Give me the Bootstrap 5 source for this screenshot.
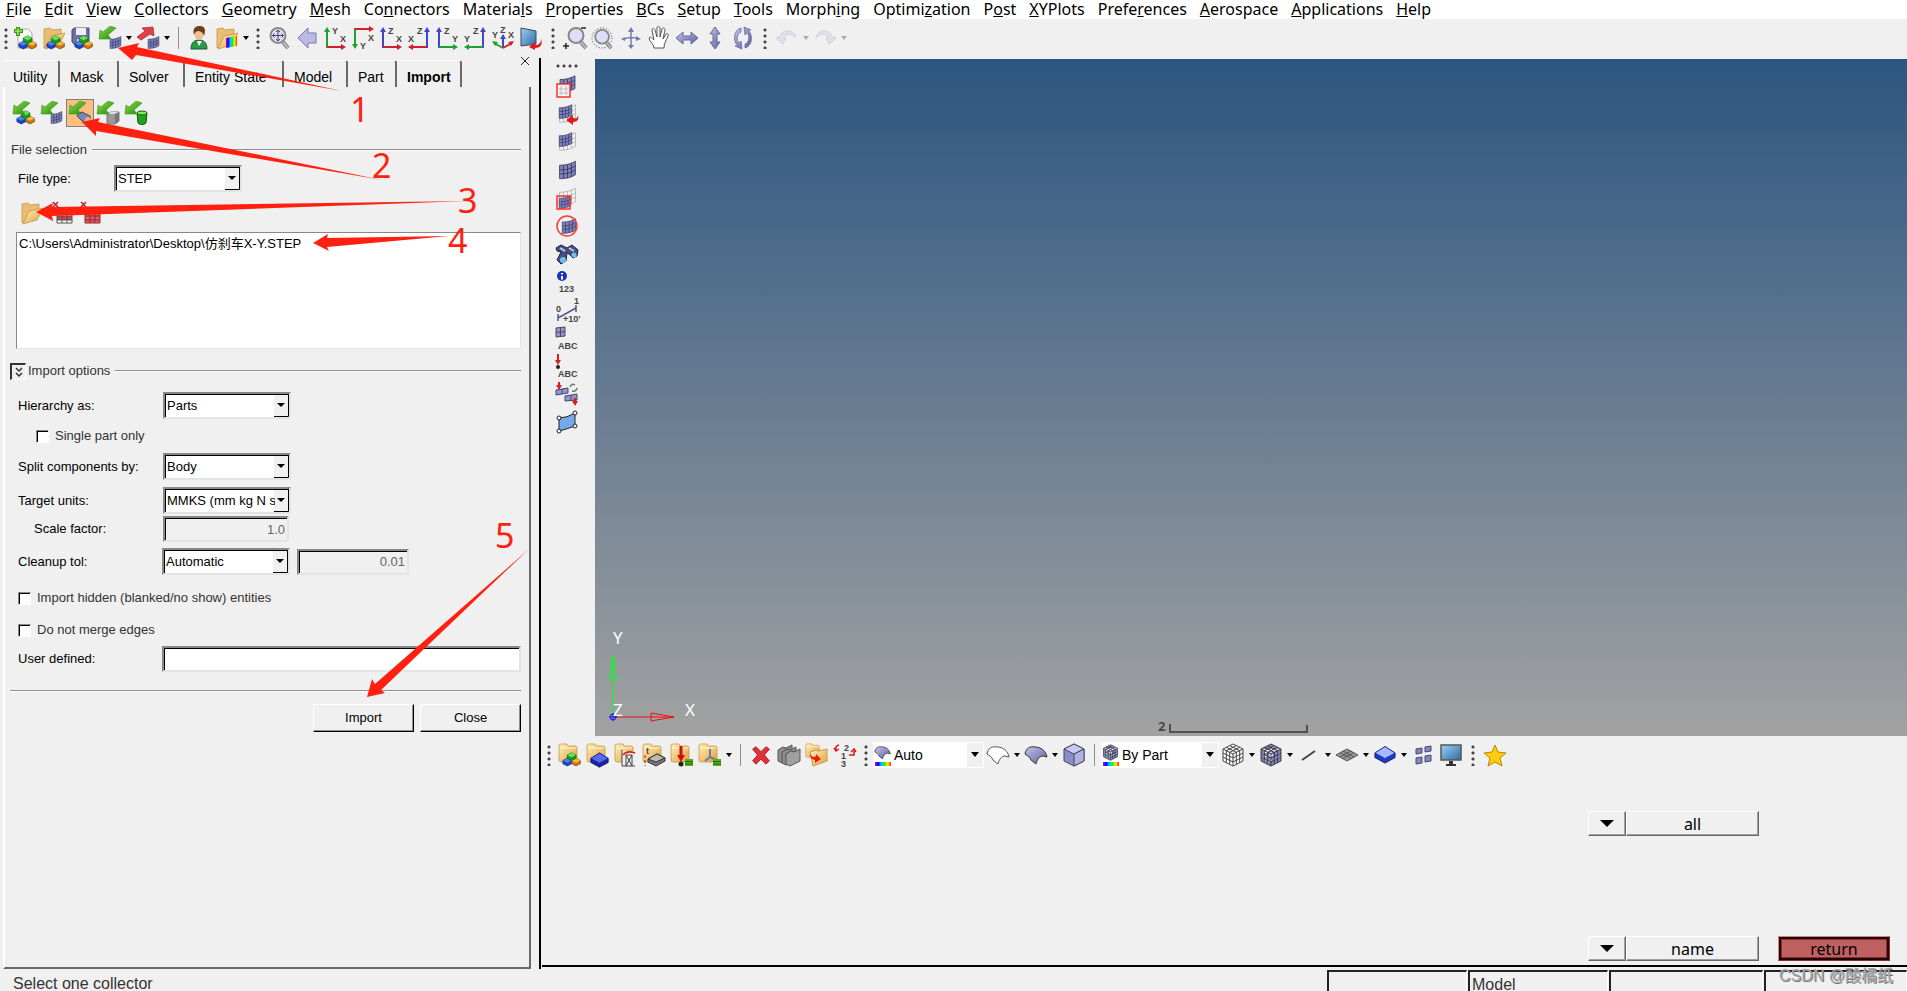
<!DOCTYPE html>
<html lang="en">
<head>
<meta charset="utf-8">
<meta name="viewport" content="width=device-width, initial-scale=1">
<title>Model import</title>
<link href="https://cdn.jsdelivr.net/npm/bootstrap@5.3.0/dist/css/bootstrap.min.css" rel="stylesheet">
<style>
  :root { --face: #f0f0f0; --ui: "Liberation Sans", "Noto Sans CJK SC", sans-serif; --menu: "Noto Sans", sans-serif; --mark: #ff2010; }
  body { background: var(--face); color: #000; font: 13px/16px var(--ui); min-height: 100vh; overflow: hidden; }
  .menubar { background: #fff; font: 16px/19px var(--menu); height: 19px; padding-left: 6px; gap: 13px; }
  .menubar a { color: #000; text-decoration: none; padding: 0; }
  .toolstrip { height: 38px; }
  .tool { width: 28px; height: 28px; padding: 2px; border: 0; border-radius: 0; line-height: 0; flex: none; }
  .tool svg { width: 24px; height: 24px; overflow: visible; }
  .drop { width: 10px; height: 28px; padding: 0; border: 0; flex: none; display: flex; align-items: center; justify-content: center; }
  .drop::after { content: ""; border: 3px solid transparent; border-top: 4px solid #000; border-bottom: 0; }
  .drop.dim::after { border-top-color: #aaa; }
  .cmd-arrow { display: flex; align-items: center; justify-content: center; }
  .cmd-arrow::after { content: ""; border: solid transparent; border-width: 7px 7px 0; border-top-color: #000; }
  .grip { flex: none; height: 22px; background: radial-gradient(circle, #444 1px, transparent 2px) center top / 4px 6px repeat-y; }
  .grip-h { height: 4px; width: 24px; background: radial-gradient(circle, #444 1px, transparent 2px) left center / 6px 4px repeat-x; }
  .w12 { width: 12px; } .w14 { width: 14px; } .w16 { width: 16px; }
  .rule-v { flex: none; width: 13px; height: 22px; background: linear-gradient(#909090, #909090) center / 1px 100% no-repeat; }
  /* docked browser */
  .dock { width: 539px; flex: none; padding: 3px 8px 0 3px; }
  .tabs { height: 27px; }
  .tabs button { border: 0; border-top: 1px solid #fff; border-right: 2px solid #696969; border-radius: 0 3px 0 0; background: none; font-size: 14px; line-height: 16px; padding: 6px 0 0 10px; text-align: left; height: 27px; }
  .tabs .shut { border: 0; padding: 0; width: 8px; height: 8px; right: 10px; top: 0; line-height: 0; }
  .pane { border: solid; border-width: 0 2px 2px 2px; border-color: #fff #696969 #696969 #fff; padding: 12px 8px 0 5px; }
  .heading { color: #333; height: 20px; gap: 5px; }
  .heading::after { content: ""; flex: 1; height: 2px; border-top: 1px solid #909090; background: #fff; }
  .sunk { border: 2px solid; border-color: #888 #e4e4e4 #e4e4e4 #888; box-shadow: inset 1px 1px #000; border-radius: 0; background-color: #fff; color: #000; font: 13px/18px var(--ui); padding: 1px 2px; }
  select.sunk { appearance: none; width: 128px; height: 27px; padding-right: 14px; background: #fff url("data:image/svg+xml,%3Csvg xmlns='http://www.w3.org/2000/svg' width='15' height='24'%3E%3Cpath fill='%23f0f0f0' d='M0 0h15v24H0z'/%3E%3Cpath stroke='%23000' fill='none' d='M0 22.5h14.5V0'/%3E%3Cpath d='M3 9h8L7 13z'/%3E%3C/svg%3E") right top no-repeat; }
  input.sunk { height: 26px; }
  input.sunk:disabled { background: var(--face); color: #666; text-align: right; }
  .tick { appearance: none; width: 13px; height: 13px; margin: 0; border: 1px solid; border-color: #888 #fff #fff #888; box-shadow: inset 1px 1px #000; background: #fff; flex: none; }
  .opt { color: #333; gap: 6px; height: 16px; }
  .files { width: 505px; height: 117px; resize: none; box-shadow: none; border-width: 1px; display: block; line-height: 17px; padding: 2px; }
  .push { width: 101px; height: 28px; border: 1px solid; border-color: #fff #000 #000 #fff; box-shadow: inset -1px -1px #909090; background: var(--face); }
  .picked { background: #fdbe7e; border: 1px solid #808080; padding: 1px; }
  .expander { width: 16px; height: 17px; padding: 0; border: solid; border-width: 2px 1px 1px 2px; border-color: #333 #fff #fff #333; background: var(--face); line-height: 0; }
  .splitter { width: 3px; flex: none; border-left: 2px solid #000; margin-top: 1px; }
  .side { width: 53px; padding: 7px 4px 0 0; flex: none; }
  .scene { background: linear-gradient(#2c5580, #a2a2a2); margin-top: 2px; }
  .axes { left: 10px; bottom: 8px; overflow: visible; }
  .scalebar { right: 590px; bottom: 0; }
  .display { background: #fff; height: 26px; padding-left: 1px; }
  .display svg { width: 18px; height: 26px; flex: none; }
  .display select { appearance: none; border: 0; background: #fff url("data:image/svg+xml,%3Csvg xmlns='http://www.w3.org/2000/svg' width='17' height='26'%3E%3Cpath fill='%23f0f0f0' d='M0 1h16v24H0z'/%3E%3Cpath d='M4 10h8l-4 5z'/%3E%3C/svg%3E") right center no-repeat; font-size: 14px; height: 26px; padding: 0 0 0 2px; flex: 1; min-width: 0; }
  .commands { display: grid; grid-template-columns: 38px 133px 131px; grid-template-rows: 25px 25px; row-gap: 100px; justify-content: end; padding: 37px 17px 4px 0; border-bottom: 2px solid #000; }
  .commands button { font: 16px/20px var(--menu); background-color: var(--face); border: 1px solid; border-color: #fff #696969 #696969 #fff; box-shadow: inset -1px -1px #a0a0a0; padding: 0; }
  .commands .back { background: #c06060; border: 1px solid #e08080; border-right-color: #823030; border-bottom-color: #823030; box-shadow: inset 0 0 0 2px #200000, inset 0 0 0 3px #823030; margin-left: 19px; }
  .status { height: 22px; font-size: 16px; line-height: 30px; color: #333; overflow: hidden; padding-left: 13px; }
  .status .cell { border: solid; border-width: 2px 1px 0 2px; border-color: #222 #fff #fff #222; height: 21px; width: 140px; padding-left: 2px; line-height: 26px; margin: 1px 1px 0 0; flex: none; }
  .status .wide { width: 154px; }
  .status .last { width: 143px; margin-right: 0; }
  .credit { right: 14px; bottom: 4px; font: 16px/22px var(--ui); color: #aaa; text-shadow: 1px 1px #777; }
  .marks { left: 0; top: 0; pointer-events: none; }
  .marks path { fill: var(--mark); } .marks text { fill: var(--mark); font: 34px var(--menu); }
  .sym text { font: bold 9px var(--ui); fill: #444; }
  .axes text, .sym .axes text { fill: #fff; font: 17px var(--menu); }
</style>
<script src="https://cdn.jsdelivr.net/npm/bootstrap@5.3.0/dist/js/bootstrap.bundle.min.js"></script>
</head>
<body class="d-flex flex-column position-relative">

<svg width="0" height="0" class="position-absolute sym" aria-hidden="true">
  <defs>
    <linearGradient id="gFold" x2="1" y2="1"><stop offset="0" stop-color="#fff0bc"/><stop offset="1" stop-color="#e0a040"/></linearGradient>
    <linearGradient id="gGreen" x2="1" y2="1"><stop offset="0" stop-color="#8ee040"/><stop offset="1" stop-color="#1c8a10"/></linearGradient>
    <linearGradient id="gLav" x2="1" y2="1"><stop offset="0" stop-color="#c4c6ee"/><stop offset="1" stop-color="#5c5e98"/></linearGradient>
    <linearGradient id="gScr" x2="1" y2="1"><stop offset="0" stop-color="#9cd0f4"/><stop offset="1" stop-color="#2d6aa8"/></linearGradient>
    <linearGradient id="gRain"><stop offset="0" stop-color="#e0a"/><stop offset=".2" stop-color="#00f"/><stop offset=".4" stop-color="#0cf"/><stop offset=".6" stop-color="#2e2"/><stop offset=".8" stop-color="#fe0"/><stop offset="1" stop-color="#f20"/></linearGradient>
  </defs>
  <symbol id="trio" viewBox="3 2 21 22"><g stroke-width=".6"><path d="M7 18l4-2 4 2v3l-4 2-4-2z" fill="#1746c8" stroke="#0a2070"/><path d="M7 18l4-2 4 2-4 2z" fill="#4f80f0"/><path d="M15 18l4-2 4 2v3l-4 2-4-2z" fill="#c87a10" stroke="#704000"/><path d="M15 18l4-2 4 2-4 2z" fill="#f8b848"/><path d="M11 13l4-2 4 2v3l-4 2-4-2z" fill="#18a018" stroke="#0a5a0a"/><path d="M11 13l4-2 4 2-4 2z" fill="#6ee060"/></g></symbol>
  <symbol id="fold" viewBox="0 0 24 24"><path d="M2 3l6-1 2 2 9-1v6L4 21l-2 1z" fill="#e8be70" stroke="#c08c38" stroke-width=".7"/><path d="M9 10l14-3-6 12-14 4z" fill="url(#gFold)" stroke="#c08c38" stroke-width=".7"/></symbol>
  <symbol id="card-fold" viewBox="0 0 24 24"><path d="M1 3q0-2 2-2h6l1 2h7q2 0 2 2v12q0 2-2 2H3q-2 0-2-2z" fill="url(#gFold)" stroke="#c89a48" stroke-width=".8"/><path d="M2 5h16" stroke="#fff6d0"/></symbol>
  <symbol id="in" viewBox="0 0 24 24"><path d="M1 13L2 4l3 2 7-6 6 2-8 7 3 4z" fill="url(#gGreen)" stroke="#3a9020" stroke-width=".6"/></symbol>
  <symbol id="net" viewBox="0 0 24 24"><path d="M2 6C9 6 15 5 22 1v17C16 22 9 23 2 23z" fill="#7f82bd" stroke="#303358"/><path d="M7 6v17M12 5v17M17 3v17M2 12c7 0 14-1 20-5M2 17c7 0 14-1 20-5" stroke="#303358" fill="none"/></symbol>
  <symbol id="wire" viewBox="0 0 24 24"><path d="M2 6C9 6 15 5 22 1v17C16 22 9 23 2 23zM7 6v17M12 5v17M17 3v17M2 12c7 0 14-1 20-5M2 17c7 0 14-1 20-5" stroke="#999" stroke-width=".8" fill="#f4f4f4"/></symbol>
  <symbol id="disk" viewBox="0 0 24 24"><path d="M2 4l2-2h15v17H5l-3-3z" fill="#6a70ac" stroke="#44486e"/><path d="M6 2h10v7H6z" fill="#eceef8"/><path d="M7 13h8v6H7z" fill="#d0d2e2"/></symbol>
  <symbol id="lens" viewBox="0 0 24 24"><path d="M15 15l6 7" stroke="#777" stroke-width="4"/><path d="M15 15l6 7" stroke="#bbc" stroke-width="2"/><circle cx="11" cy="9.500" r="7.500" fill="#dcdff6" stroke="#888" stroke-width="2"/></symbol>
  <symbol id="roll" viewBox="0 0 24 24"><path d="M1 11C2 5 6 3 11 4c6 0 11 4 12 10l-4-1c-3 0-6 3-7 8l-5-4c-1-3-3-4-6-6z" fill="url(#gLav)" stroke="#333"/></symbol>
  <symbol id="cube3" viewBox="0 0 24 24"><path d="M2 6l10-5 10 5v12l-10 5-10-5zM2 6l10 5 10-5M12 11v12M5.300 4.300l10 5V21.300M8.700 2.700l10 5v12M15.300 2.700l-10 5v12M18.700 4.300l-10 5v12M2 10l10 5 10-5M2 14l10 5 10-5" stroke="#333" stroke-width=".9" fill="inherit"/></symbol>
  <symbol id="slab" viewBox="0 0 24 24"><path d="M1 12l11-7 11 7v5l-11 6-11-6z" fill="#2038c0" stroke="#102070"/><path d="M1 12l11-7 11 7-11 6z" fill="#a8baff" stroke="#2038c0"/></symbol>
  <symbol id="slab-dark" viewBox="0 0 24 24"><path d="M1 12l11-7 11 7v5l-11 6-11-6z" fill="#1824a0" stroke="#101860"/><path d="M1 12l11-7 11 7-11 6z" fill="#5868f0" stroke="#1824a0"/></symbol>
  <symbol id="redX" viewBox="0 0 24 24"><path d="M2 5l4-3 6 6 6-6 4 3-6 7 6 7-4 4-6-6-6 6-4-4 6-7z" fill="#e03038" stroke="#a01018"/></symbol>
</svg>

<nav class="menubar nav flex-nowrap" aria-label="Main menu">
  <a href="#"><u>F</u>ile</a><a href="#"><u>E</u>dit</a><a href="#"><u>V</u>iew</a><a href="#"><u>C</u>ollectors</a><a href="#"><u>G</u>eometry</a><a href="#"><u>M</u>esh</a><a href="#">Co<u>n</u>nectors</a><a href="#">Materia<u>l</u>s</a><a href="#"><u>P</u>roperties</a><a href="#"><u>B</u>Cs</a><a href="#"><u>S</u>etup</a><a href="#"><u>T</u>ools</a><a href="#">Morph<u>i</u>ng</a><a href="#">Optimi<u>z</u>ation</a><a href="#">P<u>o</u>st</a><a href="#"><u>X</u>YPlots</a><a href="#">Prefe<u>r</u>ences</a><a href="#"><u>A</u>erospace</a><a href="#"><u>A</u>pplications</a><a href="#"><u>H</u>elp</a>
</nav>

<div class="toolstrip d-flex align-items-center sym" role="toolbar" aria-label="Standard">
  <span class="grip w12"></span>
  <button class="btn tool" aria-label="New model"><svg viewBox="0 0 24 24"><path d="M4 3h10l4 4v15H4z" fill="#fafafa" stroke="#aaa"/><path d="M4 1v9M0 5h9" stroke="#3a9a18" stroke-width="4"/><path d="M4 2v7M1 5h7" stroke="#a4e468" stroke-width="1.500"/><use href="#trio"/></svg></button>
  <button class="btn tool" aria-label="Open model"><svg viewBox="0 0 24 24"><use href="#fold"/><use href="#trio"/></svg></button>
  <button class="btn tool" aria-label="Save model"><svg viewBox="0 0 24 24"><use href="#disk"/><use href="#trio"/></svg></button>
  <button class="btn tool" aria-label="Import"><svg viewBox="0 0 24 24"><use href="#net" x="11" y="9" width="13" height="15"/><use href="#in"/></svg></button>
  <button class="drop btn" aria-label="Import menu"></button>
  <button class="btn tool" aria-label="Export"><svg viewBox="0 0 24 24"><use href="#net" x="11" y="9" width="13" height="15"/><path d="M1 11l8-6-3-3 11-1 1 9-4-2-9 6z" fill="#e04048" stroke="#a02028" stroke-width=".7"/></svg></button>
  <button class="drop btn" aria-label="Export menu"></button>
  <span class="rule-v w14"></span>
  <button class="btn tool" aria-label="User profile"><svg viewBox="0 0 24 24"><path d="M4 23c0-7 4-9 8-9s8 2 8 9z" fill="#2c9a48" stroke="#116028"/><path d="M10 15l2 5 3-5z" fill="#fff"/><ellipse cx="12" cy="8" rx="4.500" ry="6" fill="#f0c090"/><path d="M7 9C5 2 9 0 13 0c5 0 6 4 4 10-1-3-2-4-5-5-3 0-4 1-5 4z" fill="#6a3c18"/></svg></button>
  <button class="btn tool" aria-label="Load results"><svg viewBox="0 0 24 24"><use href="#fold"/><path d="M11 12v10l11-2v-10z" fill="url(#gRain)"/></svg></button>
  <button class="drop btn" aria-label="Results menu"></button>
  <span class="grip w14"></span>
  <button class="btn tool" aria-label="Fit"><svg viewBox="0 0 24 24"><use href="#lens"/><path d="M11 4v11M5.500 9.500h11M9 6l2-2 2 2M9 13l2 2 2-2M7.500 7.500l-2 2 2 2M14.500 7.500l2 2-2 2" stroke="#445" fill="none"/></svg></button>
  <button class="btn tool" aria-label="Previous view"><svg viewBox="0 0 24 24"><path d="M3 12l10-10v5h8v10h-8v5z" fill="#b9bbe4" stroke="#7779aa"/></svg></button>
  <button class="btn tool" aria-label="XY top"><svg viewBox="0 0 24 24"><path d="M4 22V4" stroke="#20a030" stroke-width="2"/><path d="M1 6l3-5 3 5z" fill="#20a030"/><path d="M4 21h16" stroke="#d02030" stroke-width="2"/><path d="M18 18l5 3-5 3z" fill="#d02030"/><text x="9" y="8">Y</text><text x="17" y="16">X</text></svg></button>
  <button class="btn tool" aria-label="XY bottom"><svg viewBox="0 0 24 24"><path d="M3 3h17" stroke="#d02030" stroke-width="2"/><path d="M18 0l5 3-5 3z" fill="#d02030"/><path d="M4 3v16" stroke="#20a030" stroke-width="2"/><path d="M1 18l3 5 3-5z" fill="#20a030"/><text x="17" y="15">X</text><text x="9" y="23">Y</text></svg></button>
  <button class="btn tool" aria-label="XZ left"><svg viewBox="0 0 24 24"><path d="M4 22V4" stroke="#4048c8" stroke-width="2"/><path d="M1 6l3-5 3 5z" fill="#4048c8"/><path d="M4 21h16" stroke="#d02030" stroke-width="2"/><path d="M18 18l5 3-5 3z" fill="#d02030"/><text x="9" y="8">Z</text><text x="17" y="16">X</text></svg></button>
  <button class="btn tool" aria-label="XZ right"><svg viewBox="0 0 24 24"><path d="M20 22V4" stroke="#4048c8" stroke-width="2"/><path d="M17 6l3-5 3 5z" fill="#4048c8"/><path d="M20 21H5" stroke="#d02030" stroke-width="2"/><path d="M6 18l-5 3 5 3z" fill="#d02030"/><text x="10" y="8">Z</text><text x="1" y="16">X</text></svg></button>
  <button class="btn tool" aria-label="YZ left"><svg viewBox="0 0 24 24"><path d="M4 22V4" stroke="#4048c8" stroke-width="2"/><path d="M1 6l3-5 3 5z" fill="#4048c8"/><path d="M4 21h16" stroke="#20a030" stroke-width="2"/><path d="M18 18l5 3-5 3z" fill="#20a030"/><text x="9" y="8">Z</text><text x="17" y="16">Y</text></svg></button>
  <button class="btn tool" aria-label="YZ right"><svg viewBox="0 0 24 24"><path d="M20 22V4" stroke="#4048c8" stroke-width="2"/><path d="M17 6l3-5 3 5z" fill="#4048c8"/><path d="M20 21H5" stroke="#20a030" stroke-width="2"/><path d="M6 18l-5 3 5 3z" fill="#20a030"/><text x="10" y="8">Z</text><text x="1" y="16">Y</text></svg></button>
  <button class="btn tool" aria-label="Isometric"><svg viewBox="0 0 24 24"><path d="M12 22V11" stroke="#4048c8" stroke-width="2"/><path d="M9 13l3-5 3 5z" fill="#4048c8"/><path d="M12 22l-9-5" stroke="#20a030" stroke-width="2"/><path d="M12 22l9-5" stroke="#d02030" stroke-width="2"/><path d="M1 15l6 1-3 4z" fill="#20a030"/><path d="M23 15l-6 1 3 4z" fill="#d02030"/><text x="1" y="12">Y</text><text x="9" y="7">Z</text><text x="17" y="12">X</text></svg></button>
  <button class="btn tool" aria-label="Restore view"><svg viewBox="0 0 24 24"><path d="M2 2l15 3v13l-15 2z" fill="url(#gScr)" stroke="#445"/><path d="M22 13c0 5-3 6-6 6v-3l-6 5 6 3v-2c5 0 8-3 6-9z" fill="#e01818"/></svg></button>
  <span class="grip w16"></span>
  <button class="btn tool" aria-label="Zoom"><svg viewBox="0 0 24 24"><use href="#lens" x="2"/><path d="M0 20h6M3 17v6M18 2h5" stroke="#222" stroke-width="1.500"/></svg></button>
  <button class="btn tool" aria-label="Circle zoom"><svg viewBox="0 0 24 24"><circle cx="11" cy="12" r="10" fill="none" stroke="#333" stroke-dasharray="1 2"/><use href="#lens" x="1" y="2" width="22" height="22"/></svg></button>
  <button class="btn tool" aria-label="Rotate"><svg viewBox="0 0 24 24"><path d="M12 5v16M5 13q7-3 15 0" stroke="#7779aa" stroke-width="1.500" fill="none"/><path d="M12 1l-3 5h6zM22 13l-5-3v5zM2 13l4-2v4zM12 23l-3-4h6z" fill="#7779aa"/></svg></button>
  <button class="btn tool" aria-label="Pan"><svg viewBox="0 0 24 24"><path d="M7 22c0-4-5-7-5-10 1-2 3 0 5 2L5 4c0-2 2-2 3 0l2 7V2c0-2 3-2 3 0v9l2-8c1-2 3-1 3 1l-2 9 3-5c1-1 3 0 2 2-2 5-4 7-4 12z" fill="#fff" stroke="#555"/></svg></button>
  <button class="btn tool" aria-label="Slide sideways"><svg viewBox="0 0 24 24"><path d="M1 12l7-6v4h8V6l7 6-7 6v-4H8v4z" fill="url(#gLav)" stroke="#66689c"/></svg></button>
  <button class="btn tool" aria-label="Slide vertically"><svg viewBox="0 0 24 24"><path d="M12 1l5 7h-3v8h3l-5 7-5-7h3V8H7z" fill="url(#gLav)" stroke="#66689c"/></svg></button>
  <button class="btn tool" aria-label="Spin"><svg viewBox="0 0 24 24"><path d="M10 2c-8 2-8 14-3 18H4l7 3-1-8-2 2C5 14 6 7 10 6zM14 22c8-2 8-14 3-18h3l-7-3 1 8 2-2c3 3 2 10-2 11z" fill="url(#gLav)" stroke="#66689c" stroke-width=".8"/></svg></button>
  <span class="grip w16"></span>
  <button class="btn tool" aria-label="Undo"><svg viewBox="0 0 24 24"><path d="M1 12l7 6 3-6H9c1-5 8-5 12 0C20 3 7 2 5 11z" fill="#dfe0ec" stroke="#d0d1e0"/></svg></button>
  <button class="drop dim btn" aria-label="Undo list"></button>
  <button class="btn tool" aria-label="Redo"><svg viewBox="0 0 24 24"><path d="M23 12l-7 6-3-6h2C14 7 7 7 3 12 4 3 17 2 19 11z" fill="#dfe0ec" stroke="#d0d1e0"/></svg></button>
  <button class="drop dim btn" aria-label="Redo list"></button>
</div>

<main class="d-flex flex-grow-1">
  <section class="dock d-flex flex-column position-relative" aria-label="Browser">
    <div class="tabs d-flex" role="tablist">
      <button role="tab" style="width:57px">Utility</button><button role="tab" style="width:59px">Mask</button><button role="tab" style="width:66px">Solver</button><button role="tab" style="width:99px">Entity State</button><button role="tab" style="width:64px">Model</button><button role="tab" style="width:49px">Part</button><button role="tab" class="fw-bold" style="width:65px" aria-selected="true">Import</button>
      <button class="shut position-absolute" aria-label="Close browser"><svg width="8" height="8" viewBox="0 0 8 8"><path d="M0 0l8 8M8 0L0 8" stroke="#222"/></svg></button>
    </div>
    <form class="pane flex-grow-1" onsubmit="return false">
      <div class="d-flex">
        <button class="btn tool" aria-label="Import model"><svg viewBox="0 0 24 24"><use href="#trio"/><use href="#in"/></svg></button>
        <button class="btn tool" aria-label="Import solver deck"><svg viewBox="0 0 24 24"><use href="#net" x="10" y="9" width="13" height="15"/><use href="#in"/></svg></button>
        <button class="btn tool picked" aria-label="Import geometry"><svg viewBox="0 0 24 24"><path d="M9 15q1-4 5-4l8 4q2 4-2 8h-3z" fill="#7f82b4" stroke="#44466e"/><ellipse cx="20" cy="19" rx="3" ry="3" fill="#e8b070"/><use href="#in"/></svg></button>
        <button class="btn tool" aria-label="Import connectors"><svg viewBox="0 0 24 24"><path d="M11 13l4-2h8v9l-4 3h-8z" fill="#999" stroke="#777"/><path d="M11 13l4-2h8l-4 2z" fill="#ddd"/><path d="M19 13l4-2v9l-4 3z" fill="#777"/><use href="#in"/></svg></button>
        <button class="btn tool" aria-label="Import materials"><svg viewBox="0 0 24 24"><path d="M13 12l1 10c2 2 6 2 8 0l1-10z" fill="#22a020" stroke="#0c600c"/><ellipse cx="18" cy="12" rx="5" ry="2" fill="#80e860" stroke="#0c600c"/><use href="#in"/></svg></button>
      </div>
      <div class="heading d-flex align-items-center" style="margin-top:13px;padding-left:1px">File selection</div>
      <div class="d-flex align-items-center ps-2" style="margin-top:5px"><label for="ftype" style="width:96px">File type:</label><select id="ftype" class="sunk"><option>STEP</option></select></div>
      <div class="d-flex ps-2" style="margin-top:7px">
        <button class="btn tool" aria-label="Browse files"><svg viewBox="0 0 24 24"><use href="#fold"/></svg></button>
        <button class="btn tool ms-1" aria-label="Remove file"><svg viewBox="0 0 24 24"><path d="M1 1l5 5M6 1L1 6" stroke="#c02028" stroke-width="1.500"/><path d="M5 8h15v14H5z" fill="#fff"/><path d="M5 15h15v4H5z" fill="#d04048"/><path d="M5 8h15v14H5zM5 15h15M5 19h15M10 8v14M15 8v14" fill="none" stroke="#555"/></svg></button>
        <button class="btn tool" aria-label="Remove all files"><svg viewBox="0 0 24 24"><path d="M1 1l5 5M6 1L1 6" stroke="#c02028" stroke-width="1.500"/><path d="M5 8h15v14H5z" fill="#d86068"/><path d="M5 8h15v14H5zM5 15h15M5 19h15M10 8v14M15 8v14" fill="none" stroke="#a02028"/></svg></button>
      </div>
      <textarea class="files sunk" style="margin:5px 0 0 6px" readonly aria-label="Files">C:\Users\Administrator\Desktop\仿刹车X-Y.STEP</textarea>
      <div class="heading d-flex align-items-center" style="margin-top:12px"><button class="expander" aria-label="Toggle import options"><svg width="10" height="12" viewBox="0 0 10 12"><path d="M2 2l3 3 3-3M2 7l3 3 3-3" fill="none" stroke="#333" stroke-width="1.500"/></svg></button><span style="margin-left:-3px">Import options</span></div>
      <div class="d-flex align-items-center ps-2" style="margin-top:11px"><label for="hier" style="width:145px">Hierarchy as:</label><select id="hier" class="sunk"><option>Parts</option></select></div>
      <div class="opt d-flex align-items-center" style="margin:9px 0 9px 26px"><input class="tick" type="checkbox" id="single"><label for="single">Single part only</label></div>
      <div class="d-flex align-items-center ps-2"><label for="split" style="width:145px">Split components by:</label><select id="split" class="sunk"><option>Body</option></select></div>
      <div class="d-flex align-items-center ps-2" style="margin-top:7px"><label for="units" style="width:145px">Target units:</label><select id="units" class="sunk"><option>MMKS (mm kg N s)</option></select></div>
      <div class="d-flex align-items-center ps-4" style="margin-top:2px"><label for="scale" style="width:129px">Scale factor:</label><input id="scale" class="sunk" style="width:126px" value="1.0" disabled></div>
      <div class="d-flex align-items-center ps-2" style="margin-top:6px"><label for="tol" style="width:144px">Cleanup tol:</label><select id="tol" class="sunk"><option>Automatic</option></select><input class="sunk" style="width:112px;margin-left:7px" value="0.01" disabled aria-label="Tolerance"></div>
      <div class="opt d-flex align-items-center ps-2" style="margin-top:15px"><input class="tick" type="checkbox" id="hidden"><label for="hidden">Import hidden (blanked/no show) entities</label></div>
      <div class="opt d-flex align-items-center ps-2 mt-3"><input class="tick" type="checkbox" id="merge"><label for="merge">Do not merge edges</label></div>
      <div class="d-flex align-items-center ps-2" style="margin-top:8px"><label for="user" style="width:144px">User defined:</label><input id="user" class="sunk flex-grow-1"></div>
      <div class="heading" style="height:2px;margin-top:18px;display:grid"></div>
      <div class="d-flex justify-content-end" style="margin-top:12px;gap:6px"><button class="push">Import</button><button class="push">Close</button></div>
    </form>
  </section>
  <div class="splitter"></div>

  <section class="d-flex flex-column flex-grow-1">
    <div class="d-flex flex-grow-1">
      <div class="side d-flex flex-column align-items-center sym" role="toolbar" aria-label="Mask">
        <span class="grip-h"></span><span class="pb-1"></span>
        <button class="btn tool" aria-label="Mask"><svg viewBox="0 0 24 24"><use href="#net" x="3" y="1" width="19" height="18"/><path d="M2 10h13v13H2z" fill="#f4f4f4" stroke="#ff3020" stroke-width="1.500"/><path d="M6 12v9M11 12v9M4 15h9M4 19h9" stroke="#bbb"/></svg></button>
        <button class="btn tool" aria-label="Reverse mask"><svg viewBox="0 0 24 24"><use href="#wire" x="3" y="1" width="19" height="21"/><use href="#net" x="3" y="2" width="15" height="15"/><path d="M23 13c0 3-2 4-5 3v-3l-7 5 7 5v-3c5 0 6-3 5-7z" fill="#e01818"/></svg></button>
        <button class="btn tool" aria-label="Unmask adjacent"><svg viewBox="0 0 24 24"><use href="#wire" x="3" y="1" width="19" height="21"/><use href="#net" x="3" y="2" width="15" height="15"/></svg></button>
        <button class="btn tool" aria-label="Unmask all"><svg viewBox="0 0 24 24"><use href="#net" x="3" y="2" width="19" height="20"/></svg></button>
        <button class="btn tool" aria-label="Unmask shown"><svg viewBox="0 0 24 24"><use href="#wire" x="3" y="1" width="19" height="20"/><use href="#net" x="3" y="9" width="14" height="14"/><path d="M2 10h13v13H2z" fill="none" stroke="#ff3020" stroke-width="1.500"/></svg></button>
        <button class="btn tool" aria-label="Spherical clipping"><svg viewBox="0 0 24 24"><use href="#net" x="6" y="4" width="16" height="16"/><circle cx="12" cy="12" r="10" fill="none" stroke="#f04038" stroke-width="1.500"/></svg></button>
        <button class="btn tool" aria-label="Find"><svg viewBox="0 0 24 24"><path d="M1 6l5-3 6 3 5-3 6 5-1 6-4 2-4-4-2-1-1 8-5 3-4-4 4-8-4-1z" fill="#465080" stroke="#18203c"/><path d="M5 6l5 3M14 6l5 3" stroke="#c4cce8" stroke-width="2"/><circle cx="8" cy="18" r="3" fill="#70c0f0"/><circle cx="19" cy="13" r="2.500" fill="#70c0f0"/></svg></button>
        <button class="btn tool" aria-label="Numbers"><svg viewBox="0 0 24 24"><circle cx="7" cy="6" r="5" fill="#2030b8"/><path d="M7 3v1.500M7 6v3.500" stroke="#fff" stroke-width="2"/><text x="4" y="22">123</text></svg></button>
        <button class="btn tool" aria-label="Measure"><svg viewBox="0 0 24 24"><path d="M3 20L21 10M3 16v7M21 7v7" stroke="#55588c" stroke-width="1.500"/><text x="1" y="14">0</text><text x="19" y="6">1</text><text x="8" y="24">+10'</text></svg></button>
        <button class="btn tool" aria-label="Element labels"><svg viewBox="0 0 24 24"><path d="M1 2l9-1v9l-9 1zM1 6.500l9-1M5.500 1.500v9" fill="#9496c8" stroke="#44466e"/><text x="3" y="23">ABC</text></svg></button>
        <button class="btn tool" aria-label="Load labels"><svg viewBox="0 0 24 24"><path d="M3 0v8" stroke="#d82020" stroke-width="2"/><path d="M0 6h6l-3 5z" fill="#d82020"/><circle cx="3" cy="13" r="2" fill="#222"/><text x="3" y="23">ABC</text></svg></button>
        <button class="btn tool" aria-label="Load handles"><svg viewBox="0 0 24 24"><path d="M1 8l12-2v5L1 13zM10 14l12-2v6l-12 1zM7 7v5M16 13v5" fill="#9496c8" stroke="#44466e"/><path d="M4 0v5M20 16v4" stroke="#d82020" stroke-width="2"/><path d="M1 3h6L4 8zM17 19h6l-3 5z" fill="#d82020"/><path d="M15 5q2-4 5-2M22 6q-1 4-5 3" stroke="#777" fill="none" stroke-width="1.500"/></svg></button>
        <button class="btn tool" aria-label="Surface"><svg viewBox="0 0 24 24"><path d="M4 8q8 0 16-5v13q-8 3-16 5z" fill="#76a8ec" stroke="#222"/><g fill="#fff" stroke="#222"><circle cx="4" cy="8" r="2"/><circle cx="20" cy="3" r="2"/><circle cx="20" cy="16" r="2"/><circle cx="4" cy="21" r="2"/></g></svg></button>
      </div>
      <div class="scene flex-grow-1 position-relative">
        <svg class="axes position-absolute" width="100" height="100" viewBox="0 0 100 100" fill="none" aria-hidden="true"><path d="M8 89V28M4 51h8L8 28z" stroke="#00ff20"/><path d="M8 89h61M46 85v8l23-4z" stroke="#f01010"/><circle cx="8" cy="89" r="3" stroke="#1010ff"/><path d="M4 89h8M8 85v8" stroke="#1010ff"/><text x="8" y="16">Y</text><text x="8" y="88">Z</text><text x="80" y="88">X</text></svg>
        <svg class="scalebar position-absolute" width="160" height="20" viewBox="0 0 160 20" fill="none" aria-hidden="true"><path d="M13 8v8h137M150 9v8" stroke="#505050" stroke-width="2"/><text x="1" y="15" fill="#484848" font-family="Noto Sans" font-weight="bold" font-size="13">2</text></svg>
      </div>
    </div>

    <div class="toolstrip d-flex align-items-center sym" role="toolbar" aria-label="Display">
      <span class="grip w14"></span>
      <button class="btn tool" aria-label="Assemblies"><svg viewBox="0 0 24 24"><use href="#card-fold"/><use href="#trio"/></svg></button>
      <button class="btn tool" aria-label="Components"><svg viewBox="0 0 24 24"><use href="#card-fold"/><use href="#slab-dark" x="4" y="6" width="19" height="19"/></svg></button>
      <button class="btn tool" aria-label="Materials"><svg viewBox="0 0 24 24"><use href="#card-fold"/><path d="M8 8h13v15H8z" fill="#eee"/><path d="M8 7v16h13M12 23V12h6v11M12 12l6 11M18 12l-6 11" stroke="#444" fill="none"/><path d="M9 12q4-5 12-2" stroke="#e01818" stroke-width="1.500" fill="none"/></svg></button>
      <button class="btn tool" aria-label="Properties"><svg viewBox="0 0 24 24"><use href="#card-fold"/><path d="M6 16l9-5 8 4v3l-9 5-8-4z" fill="#777" stroke="#333"/><path d="M6 16l9-5 8 4-9 4z" fill="#bbb" stroke="#333"/><path d="M3 12v11" stroke="#b01818" stroke-dasharray="3 2"/><text x="4" y="11">t</text></svg></button>
      <button class="btn tool" aria-label="Load collectors"><svg viewBox="0 0 24 24"><use href="#card-fold"/><path d="M11 3v10" stroke="#d01010" stroke-width="3"/><path d="M7 12h8l-4 7z" fill="#d01010"/><circle cx="11" cy="21" r="2.500" fill="#222"/><path d="M15 16h8v7h-8z" fill="#58b020"/><path d="M15 18.500h8M15 21h8" stroke="#266010"/></svg></button>
      <button class="btn tool" aria-label="Systems"><svg viewBox="0 0 24 24"><use href="#card-fold"/><path d="M12 6v8l-5 4M12 14l6 3" stroke="#7078a8" stroke-width="2" fill="none"/><path d="M15 16h8v7h-8z" fill="#58b020"/><path d="M15 18.500h8M15 21h8" stroke="#266010"/></svg></button>
      <button class="drop btn" aria-label="More collectors"></button>
      <span class="rule-v w14"></span>
      <button class="btn tool" aria-label="Delete"><svg viewBox="0 0 24 24"><use href="#redX" x="2" y="2" width="20" height="20"/></svg></button>
      <button class="btn tool" aria-label="Card edit"><svg viewBox="0 0 24 24"><g fill="#8c8c8c" stroke="#555"><path d="M1 7l5-3 3 1 6-3v13l-10 5-4-2z"/><path d="M5 9l5-3 3 1 6-3v13l-10 5-4-2z"/><path d="M9 11l5-3 3 1 6-3v12l-10 5-4-2z" fill="#a0a0a0"/></g></svg></button>
      <button class="btn tool" aria-label="Organize"><svg viewBox="0 0 24 24"><use href="#card-fold" width="18" height="18"/><path d="M5 9l6-2 2 1 9-2v12l-14 5z" fill="url(#gFold)" stroke="#c89a48"/><path d="M5 10q2 6 6 3v-2l5 5-6 4v-3q-5 0-5-7z" fill="#e02010"/></svg></button>
      <button class="btn tool" aria-label="Renumber"><svg viewBox="0 0 24 24"><text x="11" y="8">2</text><text x="8" y="16">1</text><text x="8" y="24">3</text><path d="M6 2q-4 1-3 5M1 5l2 3 3-2M16 12h5v-4M18 9l3-3 2 3" fill="none" stroke="#d81818" stroke-width="1.500"/></svg></button>
      <span class="grip w14"></span>
      <div class="display d-flex" style="width:111px"><svg viewBox="0 0 18 26"><use href="#roll" y="2" width="17" height="17"/><path d="M1 20h16v4H1z" fill="url(#gRain)"/></svg><select aria-label="Colour mode"><option>Auto</option></select></div>
      <button class="btn tool" aria-label="Wireframe geometry"><svg viewBox="0 0 24 24"><path d="M1 11C2 5 6 3 11 4c6 0 11 4 12 10l-4-1c-3 0-6 3-7 8l-5-4c-1-3-3-4-6-6z" fill="#fff" stroke="#555"/></svg></button>
      <button class="drop btn" aria-label="Wireframe options"></button>
      <button class="btn tool" aria-label="Shaded geometry"><svg viewBox="0 0 24 24"><use href="#roll"/></svg></button>
      <button class="drop btn" aria-label="Shading options"></button>
      <button class="btn tool" aria-label="Transparency"><svg viewBox="0 0 24 24"><path d="M2 6l10-5 10 5v12l-10 5-10-5z" fill="#8c8fc6" stroke="#446"/><path d="M2 6l10-5 10 5-10 5z" fill="#c8caf0" stroke="#446"/><path d="M12 11l10-5v12l-10 5z" fill="#b0b3dc" stroke="#446"/></svg></button>
      <span class="rule-v"></span>
      <div class="display d-flex" style="width:118px"><svg viewBox="0 0 18 26"><use href="#cube3" y="2" width="17" height="17" fill="#8084c0"/><path d="M1 20h16v4H1z" fill="url(#gRain)"/></svg><select aria-label="Element colour mode"><option>By Part</option></select></div>
      <button class="btn tool" aria-label="Wireframe elements"><svg viewBox="0 0 24 24"><use href="#cube3" fill="#fff"/></svg></button>
      <button class="drop btn" aria-label="Element wireframe options"></button>
      <button class="btn tool" aria-label="Shaded elements"><svg viewBox="0 0 24 24"><use href="#cube3" fill="#8084c0"/></svg></button>
      <button class="drop btn" aria-label="Element shading options"></button>
      <button class="btn tool" aria-label="1D display"><svg viewBox="0 0 24 24"><path d="M5 17L18 8" stroke="#444" stroke-width="2"/></svg></button>
      <button class="drop btn" aria-label="1D options"></button>
      <button class="btn tool" aria-label="2D display"><svg viewBox="0 0 24 24"><path d="M1 12l11-6 11 6-11 6zM5 9.500l11 6M8 8l11 6M19 9.500l-11 6M16 8l-11 6" fill="#999" stroke="#555"/></svg></button>
      <button class="drop btn" aria-label="2D options"></button>
      <button class="btn tool" aria-label="3D display"><svg viewBox="0 0 24 24"><use href="#slab" x="1" y="-1" width="22" height="22"/></svg></button>
      <button class="drop btn" aria-label="3D options"></button>
      <button class="btn tool" aria-label="Shrink"><svg viewBox="0 0 24 24"><g fill="#8488bc" stroke="#44466e"><path d="M5 6l6-1v5l-6 1zM14 4l6-1v5l-6 1zM5 15l6-1v6l-6 1zM14 13l6-1v6l-6 1z"/></g></svg></button>
      <button class="btn tool" aria-label="Visualization"><svg viewBox="0 0 24 24"><path d="M2 2h20v15H2z" fill="url(#gScr)" stroke="#555" stroke-width="1.500"/><path d="M10 18h4v3h3v2H7v-2h3z" fill="#333"/></svg></button>
      <span class="grip w16"></span>
      <button class="btn tool" aria-label="Favourites"><svg viewBox="0 0 24 24"><path d="M12 2l3 7 8 1-6 5 2 8-7-4-7 4 2-8-6-5 8-1z" fill="#ffcc10" stroke="#b88600"/></svg></button>
    </div>

    <div class="commands">
      <button class="cmd-arrow" aria-label="Selection type"></button><button>all</button><span></span>
      <button class="cmd-arrow" aria-label="Name type"></button><button>name</button><button class="back">return</button>
    </div>
    <div style="height:2px"></div>
  </section>
</main>

<footer class="status d-flex position-relative">
  <span class="flex-grow-1">Select one collector</span>
  <span class="cell"></span><span class="cell">Model</span><span class="cell wide"></span><span class="cell last"></span>
</footer>
<div class="credit position-absolute">CSDN @酸橘纸</div>

<svg class="marks position-absolute" width="540" height="720" viewBox="0 0 540 720" aria-hidden="true">
  <path d="M118 48l21-5-2 4 205 44-206-36-4 5z"/><path d="M82 122l18-4-2 4 284 58-286-49v5z"/><path d="M36 212l17-9-1 4 416-6-416 15 1 5z"/><path d="M313 243l15-9-1 4 122-2-122 11 2 4z"/><path d="M367 697l5-18 3 5 154-135-148 141 4 3z"/>
  <text x="350" y="122">1</text><text x="372" y="178">2</text><text x="458" y="213">3</text><text x="448" y="253">4</text><text x="495" y="548">5</text>
</svg>
</body>
</html>
